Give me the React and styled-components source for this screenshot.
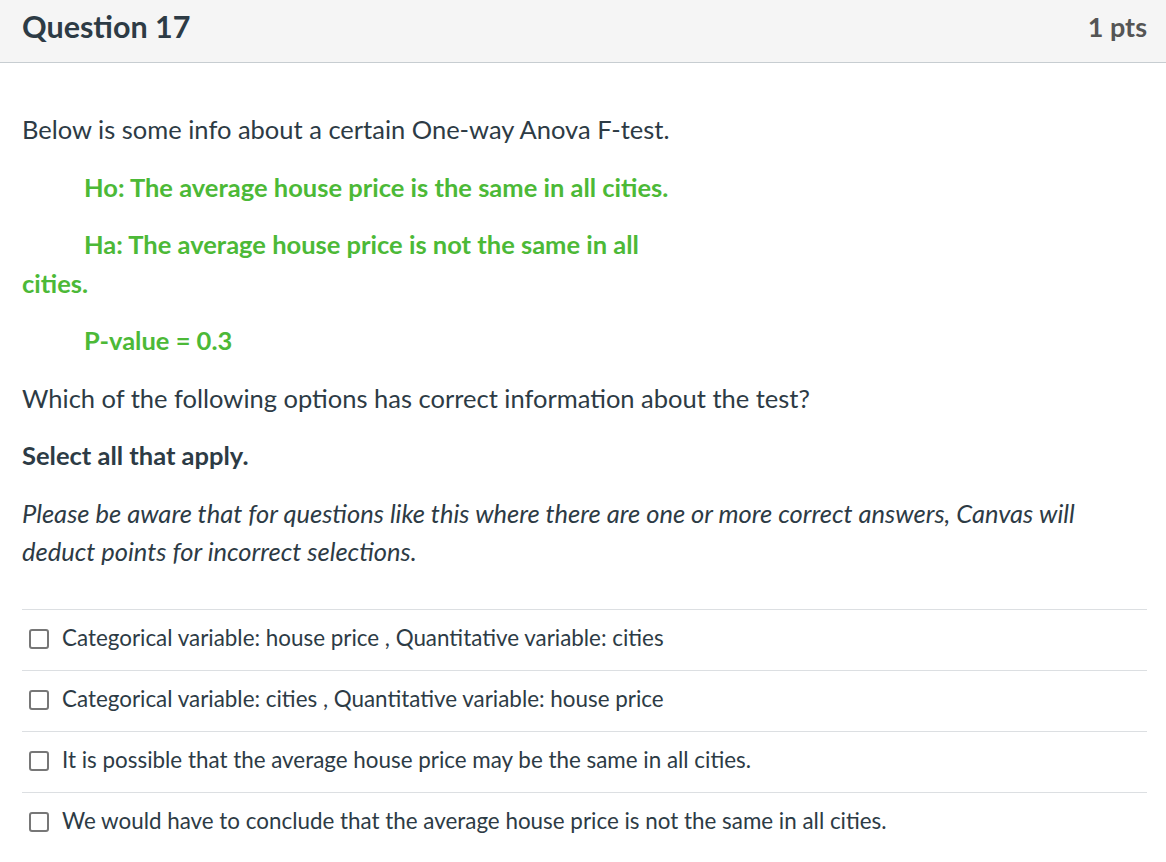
import React from 'react';
import styled, { createGlobalStyle } from 'styled-components';

const GlobalStyle = createGlobalStyle`
  html, body {
    margin: 0;
    padding: 0;
    background: #fff;
  }
  body {
    font-family: Lato, "Liberation Sans", sans-serif;
    color: #2d3b45;
  }
`;

const Card = styled.div`
  width: 1166px;
`;

const Header = styled.div`
  display: flex;
  align-items: center;
  justify-content: space-between;
  height: 63px;
  padding: 0 19px 10px 22px;
  box-sizing: border-box;
  background: #f5f5f5;
  border-bottom: 1px solid #c7cdd1;
`;

const Title = styled.h2`
  margin: 0;
  font-size: 30.5px;
  font-weight: 700;
  color: #2d3b45;
`;

const Points = styled.div`
  font-size: 27px;
  font-weight: 700;
  color: #555;
`;

const Body = styled.div`
  padding: 47px 19px 0 22px;
`;

const Para = styled.p`
  margin: 0 0 19px;
  font-size: 25.5px;
  line-height: 38.5px;
  font-weight: ${p => (p.$bold ? 700 : 400)};
  font-style: ${p => (p.$italic ? 'italic' : 'normal')};
  color: ${p => (p.$green ? '#4cb937' : '#2d3b45')};
`;

const Indent = styled.span`
  display: inline-block;
  width: 62px;
`;

const Answers = styled.div`
  margin-top: 38px;
`;

const Row = styled.label`
  display: flex;
  align-items: center;
  gap: 13px;
  height: 61px;
  padding: 0 0 4px 7px;
  box-sizing: border-box;
  border-top: 1px solid #dcdfe2;
  font-size: 22.4px;
  color: #2d3b45;
`;

const Box = styled.span`
  width: 20px;
  height: 20px;
  box-sizing: border-box;
  border: 2px solid #777;
  border-radius: 3px;
  margin-top: 3px;
  flex: none;
`;

const answers = [
  'Categorical variable: house price , Quantitative variable: cities',
  'Categorical variable: cities , Quantitative variable: house price',
  'It is possible that the average house price may be the same in all cities.',
  'We would have to conclude that the average house price is not the same in all cities.',
];

export default function App() {
  return (
    <Card>
      <GlobalStyle />
      <Header>
        <Title>Question 17</Title>
        <Points>1 pts</Points>
      </Header>
      <Body>
        <Para>Below is some info about a certain One-way Anova F-test.</Para>
        <Para $green $bold><Indent />Ho: The average house price is the same in all cities.</Para>
        <Para $green $bold><Indent />Ha: The average house price is not the same in all<br />cities.</Para>
        <Para $green $bold><Indent />P-value = 0.3</Para>
        <Para>Which of the following options has correct information about the test?</Para>
        <Para $bold>Select all that apply.</Para>
        <Para $italic>
          Please be aware that for questions like this where there are one or more correct answers, Canvas will
          deduct points for incorrect selections.
        </Para>
        <Answers>
          {answers.map(a => (
            <Row key={a}>
              <Box />
              <span>{a}</span>
            </Row>
          ))}
        </Answers>
      </Body>
    </Card>
  );
}
